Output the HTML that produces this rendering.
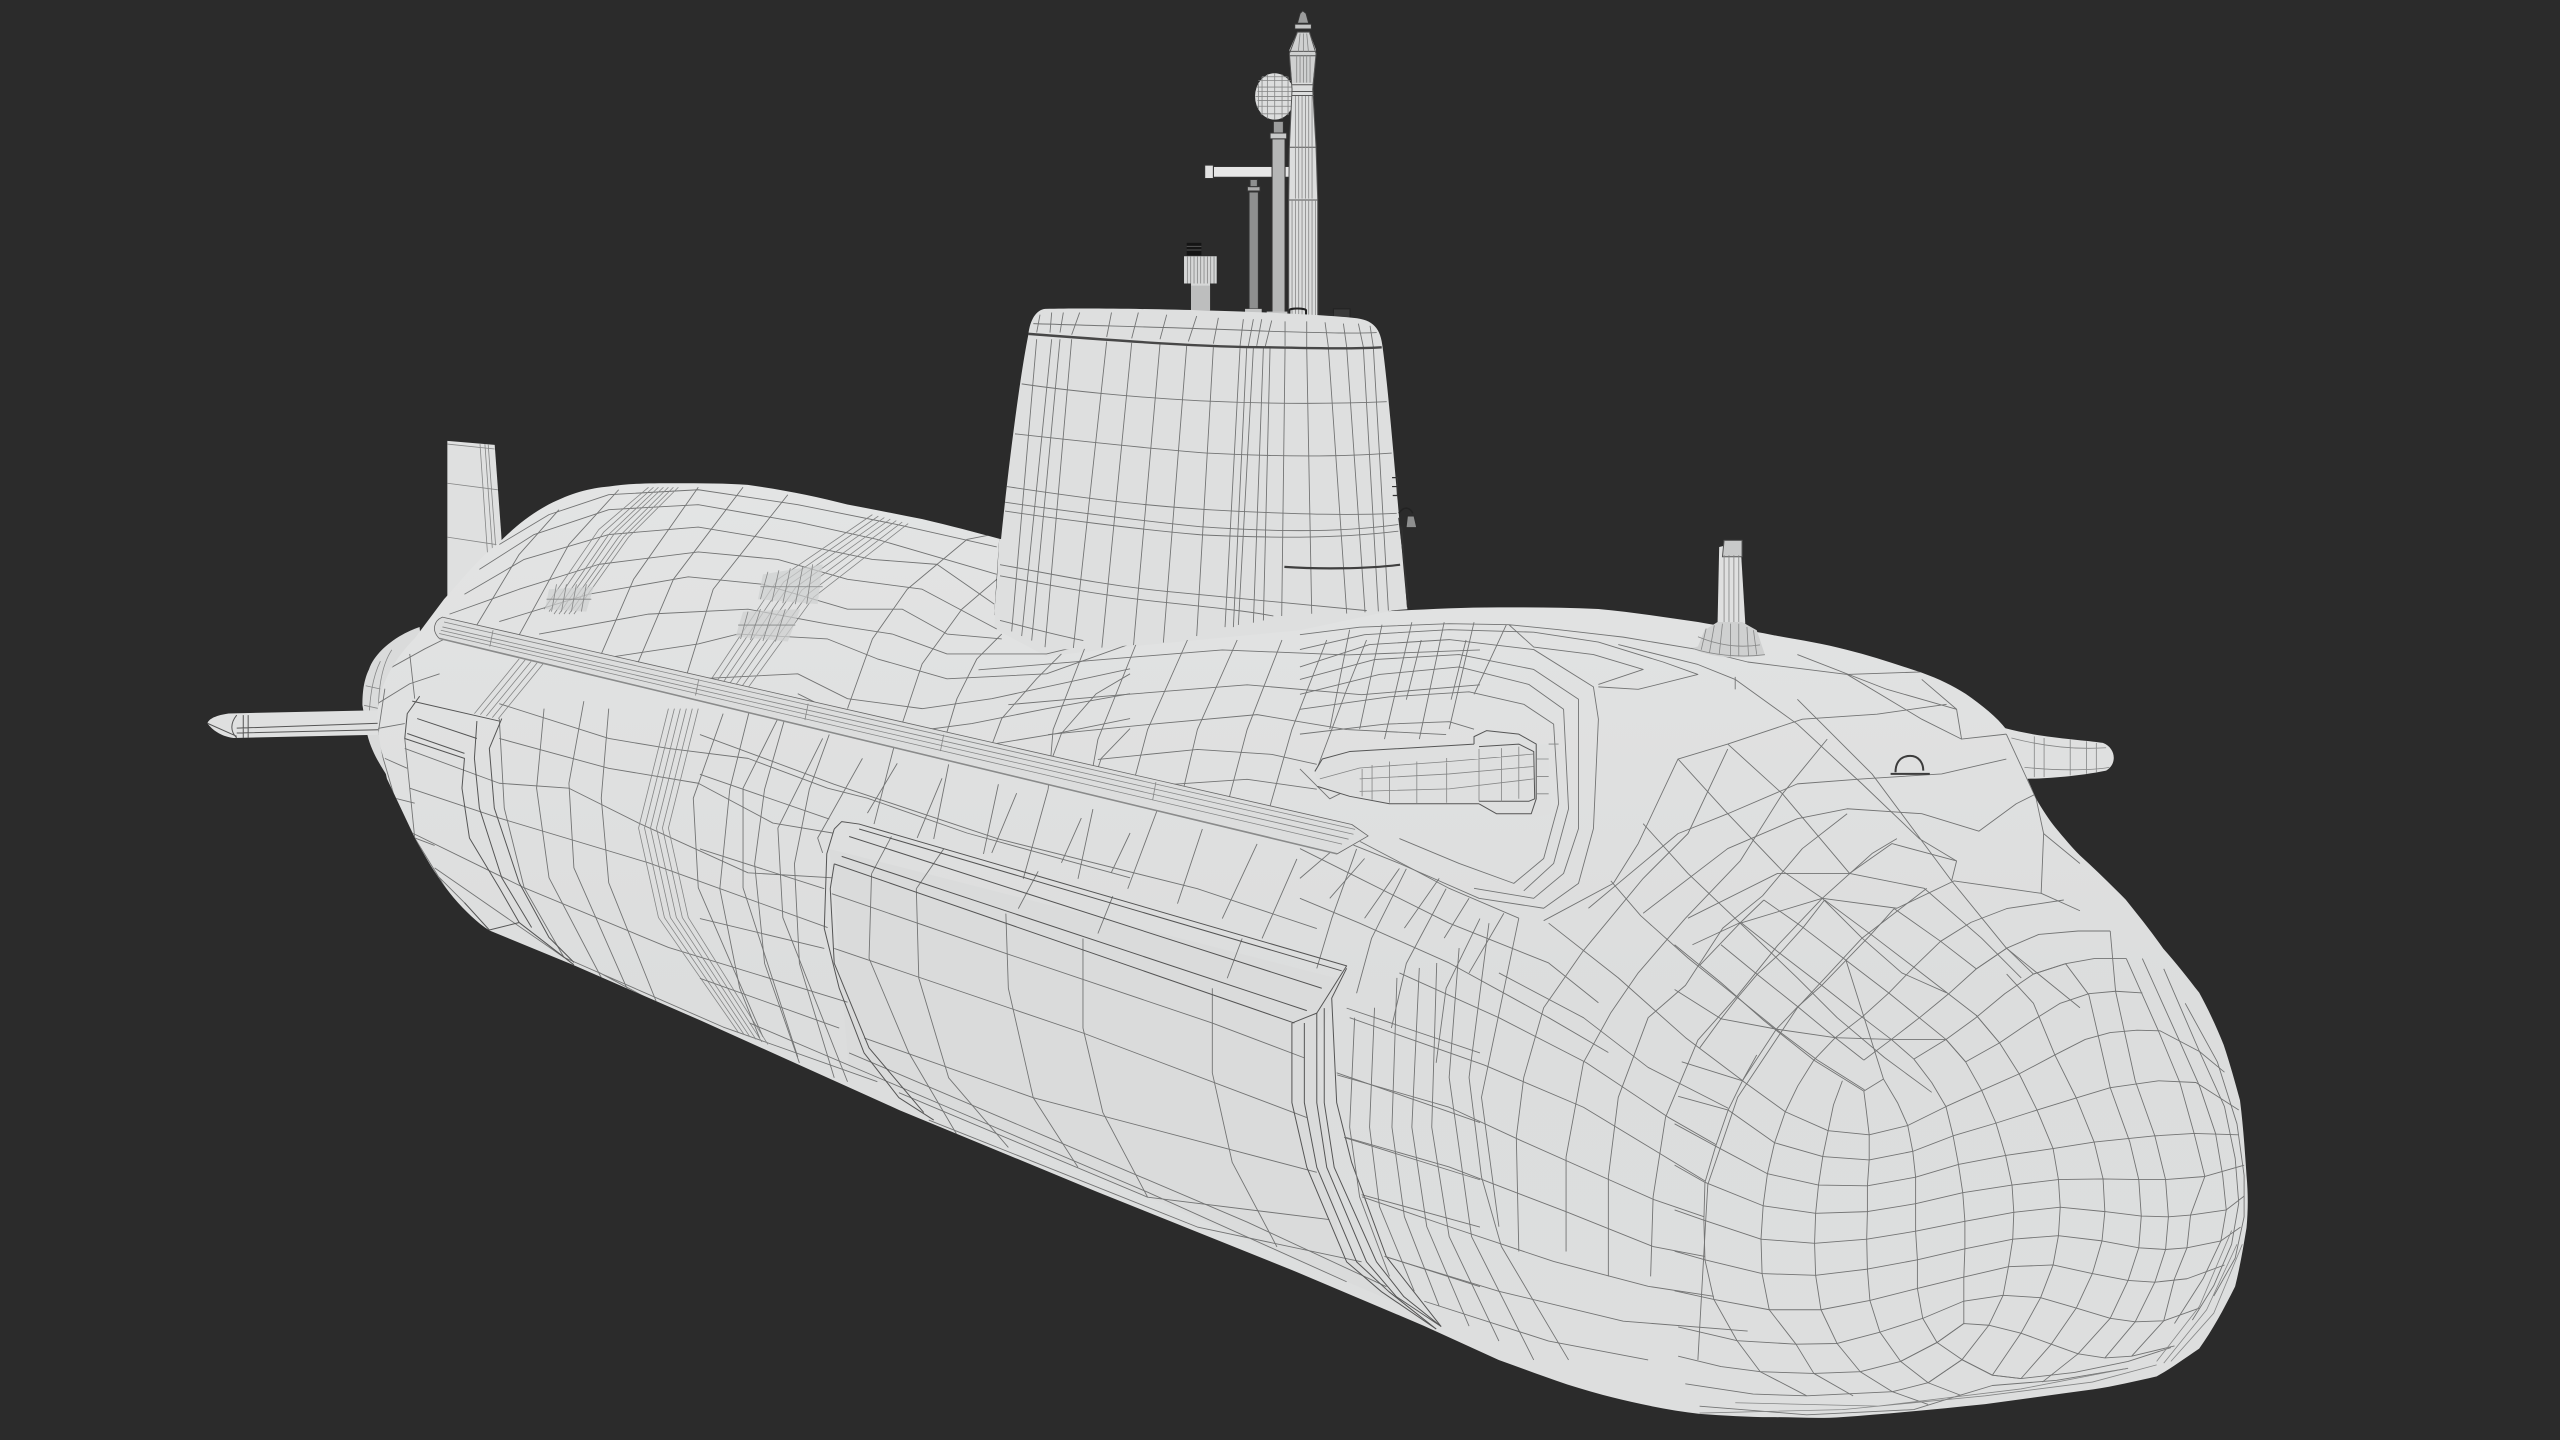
<!DOCTYPE html>
<html><head><meta charset="utf-8"><title>Submarine wireframe</title>
<style>
html,body{margin:0;padding:0;background:#2b2b2b;width:2560px;height:1440px;overflow:hidden}
svg{display:block}
path,polyline,line,rect,ellipse{vector-effect:non-scaling-stroke}
.m{fill:none;stroke:#737474;stroke-width:.9;stroke-linejoin:round}
.f{fill:none;stroke:#858686;stroke-width:.8;stroke-linejoin:round}
.d{fill:none;stroke:#555;stroke-width:1;stroke-linejoin:round}
</style></head><body>
<svg width="2560" height="1440" viewBox="0 0 1568 882" xmlns="http://www.w3.org/2000/svg">
<defs>
<linearGradient id="g" x1="0" y1="0" x2="0" y2="1"><stop offset="0" stop-color="#e3e4e4"/><stop offset=".55" stop-color="#dcdddd"/><stop offset="1" stop-color="#dddede"/></linearGradient>
<clipPath id="hc"><path id="hp" d="M231 440C231 425 238 407 254 391L272 367C283 355 293 342 306 332C316 322 325 315 336 309C350 302 361 299 373 298C385 296 400 296 412 296C430 296 445 296 458 297C480 300 500 304 519 309C535 312 550 315 565 318C582 322 597 326 612 330L609 376L613 384C622 391 630 395 641 397C650 398 660 398 671 397C680 395 686 393 692 391C726 384 761 379 796 380C816 377 836 375 857 374C877 373 897 372 918 372C938 372 958 372 979 373C1000 375 1020 378 1040 381C1056 384 1071 386 1086 389C1102 392 1116 394 1131 398C1147 402 1162 407 1177 412C1188 416 1196 420 1204 425C1214 432 1223 439 1229 447C1233 454 1235 461 1238 468C1241 475 1244 482 1247 489C1251 496 1255 502 1259 507C1264 513 1269 519 1274 524C1284 533 1293 542 1302 551C1310 561 1318 571 1325 581C1333 590 1340 599 1347 608C1353 619 1358 630 1362 640C1366 652 1369 663 1372 674C1374 690 1375 705 1376 720C1377 731 1377 741 1376 752C1374 764 1372 776 1369 788C1362 802 1355 815 1347 826C1338 832 1330 838 1321 843C1308 846 1295 849 1282 851C1260 854 1238 857 1216 860C1187 863 1157 866 1128 868C1114 869 1099 868 1085 868C1070 868 1056 867 1041 866C1015 863 985 856 960 848C945 843 932 838 918 833L872 812L794 779L672 730L551 680L429 625L351 591L300 570C292 565 285 558 278 550C268 538 261 526 254 513L237 477C234 464 232 452 231 440Z"/></clipPath>
<clipPath id="sc2"><path d="M85 700H1150L1222 1365L840 1385L700 1420L490 1440L286 1452L140 1452L5 1404L-17 1375L-40 1300Z"/></clipPath>
</defs>
<rect width="1568" height="882" fill="#2b2b2b"/>

<!-- rudder -->
<path d="M274 270L303 272.500L307 327L308 345L274 368Z" fill="#dfe0e0"/>
<g class="f"><path d="M274 272L303 275M274 296L305 300M274 329L307 334M294 272L299 345M297 272L302 342M299 272L304 340"/></g>
<!-- stern cone -->
<path d="M257 384C245 388 230 398 226 410C222 418 222 428 222 432L225 450C228 462 234 470 240 480L262 440Z" fill="#dadbdb"/>
<g class="f"><path d="M233 405C228 415 226 430 226 445M240 398C232 410 231 430 232 450M224 420L233 422M223 432L232 434"/></g>
<!-- stern plane -->
<path d="M232 435L140 437C133 438 128 440 127 443C130 447 135 451 143 452L232 450Z" fill="#dfe0e0"/>
<g class="d"><path d="M145 438C141 443 141 448 145 452M149 438L149 452M152 438L152 452M145 446L232 443M145 449L232 447M127 443L145 451"/></g>
<!-- bow plane -->
<path d="M1228 446C1250 452 1275 453 1288 455C1296 458 1297 468 1290 472C1270 476 1250 477 1240 477Z" fill="#dfe0e0"/>
<g class="f"><path d="M1232 452C1255 458 1275 459 1290 458M1240 470C1260 472 1280 472 1292 470M1246 451V476M1252 452V476M1268 453V475M1278 454L1278 474M1284 455L1284 473"/></g>
<!-- hull -->
<use href="#hp" fill="url(#g)"/>
<!-- fill behind sail base -->
<path d="M612 330L862 372L796 386L692 396L641 402L609 385Z" fill="#dedfdf"/>

<g clip-path="url(#hc)">
<!-- panel shade -->
<path d="M508 520L822 600L806 640L820 760L860 800L520 655Z" fill="#dadbdb"/>

<!-- Z3: stern / rear body -->
<g transform="translate(214.4,269.500) scale(.3047)">
<g class="m">
<path d="M300 210 400 150 520 110 700 100 900 130 1100 170 1300 215M260 260 370 190 520 140 700 130 900 165 1060 200 1300 270M230 310 350 240 520 190 700 175 880 205 1050 240 1180 250 1295 330M200 350 340 300 500 250 700 225 860 240 1000 280 1150 300 1300 380M300 365 480 310 680 275 830 290 1000 340 1110 340 1200 390 1310 400M380 390 600 350 800 340 960 370 1090 390 1200 430 1400 430 1568 390M500 440 700 410 780 390 960 400 1060 440 1200 480 1400 470 1568 410M700 480 900 470 1000 520 1150 540 1290 520 1568 460M900 510 1000 560 1100 590 1250 570 1400 540 1568 510M1100 600 1300 610 1420 590 1568 560"/>
<path d="M250 380 340 230 420 140M330 410 440 210 540 100M490 465 570 280 700 95M565 480 650 280 790 95M665 510 730 300 880 110M1000 540 1050 400 1120 300 1240 200 1290 190M1100 600 1150 450 1230 340 1300 280M1190 620 1220 520 1260 440 1310 390M1280 640 1310 560 1380 480 1430 430M1400 670 1430 590 1500 510 1568 470M1490 700 1510 640 1568 580"/>
<path d="M300 560 310 740 350 900 430 1040M390 540 375 700 400 880 510 1090M470 525 440 690 450 860 560 1110M520 540 505 720 520 890 620 1140M750 550 690 720 700 900 830 1200M860 560 790 700 790 900 900 1240M950 600 860 780 870 960 1000 1290M1030 640 940 800 950 830M1100 650 1040 750M1190 680 1140 800M1340 710 1290 830M1470 760 1430 850M1568 790 1530 870"/>
<path d="M110 620 300 690 440 700 580 770 800 870 970 880M120 700 300 760 600 850 960 980M125 790 350 900 640 1020 1000 1130M170 860 430 1040 750 1180 1060 1290M300 530 520 600 640 620 800 640 960 700 1040 720 1240 790 1568 880M300 600 520 660 700 690 850 770 970 790M500 1070 800 1230 1200 1430"/>
<path d="M60 470 150 420 190 400M55 530 120 490 180 470M55 580 110 570M120 430 130 520M70 640 115 660M90 720 130 730M130 800 170 815"/>
<path d="M110 600 130 800 210 930M70 500 55 600 90 720 160 860 230 930"/>
</g>
<g class="f">
<path d="M390 340 500 180 600 95M400 345 510 185 610 95M410 350 520 190 620 95M420 350 530 190 630 95M430 350 540 195 640 95M440 350 550 195 650 95M450 350 560 195 660 95"/>
<path d="M250 550 340 440M262 552 352 442M274 555 364 445M286 558 376 448M298 560 388 450"/>
<path d="M720 490 860 280 1050 150M732 493 872 285 1062 153M744 496 884 290 1074 156M756 500 896 296 1086 159M768 503 908 302 1098 162M780 506 920 310 1110 165M792 509 932 316 1122 168"/>
<path d="M640 540 580 780 620 960 780 1190M652 540 592 780 632 960 792 1195M664 540 604 780 644 960 804 1200M676 540 616 780 656 960 816 1205M688 540 628 780 668 960 828 1210M700 540 640 780 680 960 840 1215"/>
</g>
<!-- windows -->
<path d="M400 300L490 295L475 345L392 340ZM830 270L950 250L940 330L820 320ZM790 345L905 340L880 405L775 395Z" fill="#cfd0d0" opacity=".7"/>
<g class="f">
<path d="M415 290L405 345M435 290L425 345M455 290L445 345M475 290L465 345M395 320H485M840 265L825 320M862 262L848 325M885 258L870 328M910 255L895 330M930 250L918 330M825 295H950M800 345L785 400M825 340L805 402M850 340L830 404M875 340L855 405M780 372H895"/>
</g>
<!-- rear panel -->
<g class="d">
<path d="M140 515 115 550 110 600 230 640 225 700 240 800 300 900 340 970 450 1055"/>
<path d="M305 560 280 620 290 740 340 890 400 1000 450 1050"/>
<path d="M125 525 300 565M135 560 255 600M115 590 230 630"/>
<path d="M255 565 250 640 260 740 305 880 365 980"/>
<path d="M230 930 280 985 340 970"/>
</g>
</g>

<!-- Z2: mid body -->
<g transform="translate(428.700,392) scale(.3047)">
<g class="m">
<path d="M345 470 340 640 420 830 520 1000M435 500 440 680 500 880 620 1020M615 550 620 700 670 920 760 1060M770 600 770 780 810 950 900 1120M1030 700 1030 870 1070 1050 1160 1220"/>
<path d="M345 470 385 395M435 500 490 420M640 540 680 465M800 590 830 515M1060 680 1090 600"/>
<path d="M265 510 615 630 1030 770 1215 840M270 620 770 790 1220 960M330 800 670 920 1240 1070M400 910 900 1120 1265 1165M460 965 1000 1180 1330 1250"/>
<path d="M100 770 500 940 900 1110 1300 1290M300 830 700 1000 1100 1170 1380 1300"/>
<path d="M390 215 350 370M500 250 470 400M600 290 570 430M700 300 650 480M790 340 760 480M920 340 860 500M1010 380 960 530M1120 410 1050 560M1200 440 1130 600"/>
<path d="M170 160 130 300 110 450 130 650 200 850M100 140 60 300 40 500 80 700 120 800M260 190 220 300 190 450 200 650 270 880"/>
<path d="M0 190 270 290 600 400 1000 500 1240 580M0 270 260 360M0 420 250 500M0 560 250 620M0 680 280 780"/>
<path d="M1320 420 1270 560 1240 660M1420 460 1350 600 1320 710M1500 500 1420 650 1390 780M1568 560 1500 700 1480 850"/>
<path d="M1280 870 1568 970M1295 1000 1568 1085M1330 1115 1568 1180M1380 1240 1568 1300"/>
<path d="M1300 740 1568 830"/>
<!-- deck patch -->
<path d="M560 60 800 40 1050 20 1300 30 1568 20M620 130 850 110 1100 90 1330 110 1568 90M700 190 900 170 1120 150 1300 180 1500 190M800 240 1000 220 1150 230 1240 250M950 290 1100 280 1240 300"/>
<path d="M780 0 710 180 700 300M880 0 800 200 780 310M980 0 900 180 860 330M1080 0 1000 180 960 350M1170 0 1100 180 1050 370M1260 0 1190 180 1130 390M1340 0 1300 100 1240 260M1450 0 1420 120M1540 0 1510 120"/>
</g>
<g class="d">
<path d="M270 380 285 365 320 370 1300 655 1240 750 1190 770"/>
<path d="M320 380 1290 665M300 395 1250 700M285 435 1220 745M270 450 1195 770"/>
<path d="M270 380 255 430 250 580 280 700 330 830 400 920 470 965"/>
<path d="M270 450 262 500 270 650 340 820 450 950"/>
<path d="M1190 770 1190 930 1220 1060 1300 1250 1370 1310 1480 1385"/>
<path d="M1215 770 1215 930 1240 1060 1320 1250 1385 1310 1480 1385"/>
<path d="M1240 750 1240 930 1260 1060 1340 1250 1400 1320 1490 1380"/>
<path d="M1255 740 1255 930 1275 1060 1360 1250 1415 1320 1490 1380"/>
<path d="M1300 660 1270 720 1280 930 1310 1050 1380 1240 1490 1380"/>
</g>
</g>

<!-- Z1: forebody -->
<g transform="translate(796.200,355.200) scale(.3047)">
<g class="m">
<path d="M0 175 140 130 300 120 470 140 590 215 600 280 590 500 560 610 490 660 360 640 200 570 100 530"/>
<path d="M0 200 150 160 320 150 470 180 560 240 560 500 530 590 470 640 350 620"/>
<path d="M0 230 160 190 320 175 460 210 530 260 540 460 510 570 450 625"/>
<path d="M0 260 180 235 340 225 450 250 510 290 520 450 490 560 430 610 320 570 200 520"/>
<path d="M0 310 170 290 300 285 350 300M0 110 120 95 300 88 420 90 520 100 650 115 800 140 900 165 1100 190 1250 185M0 140 130 110 300 100 470 105 600 125 730 165 800 190 680 220 600 215M420 90 470 135 590 150 690 180 600 210"/>
<path d="M100 100 60 300M165 90 120 300M225 85 170 320M290 85 240 320M350 85 300 300M415 90 350 230M0 380 60 440 120 410"/>
<path d="M0 600 70 540M60 640 130 560M130 680 200 580M210 700 280 600M290 720 340 640M340 790 410 670"/>
<path d="M0 480 110 520 300 620 440 680M0 540 100 590 300 690 500 770 600 850M0 640 120 690 300 770 500 880 620 950"/>
<path d="M500 690 640 800 775 920 889 1006M400 790 570 880 700 980 861 1062M200 790 400 880 575 970 740 1080 836 1135M100 880 370 975 570 1060 735 1160 814 1208M75 995 300 1060 440 1125 620 1205 710 1245 812 1280M90 1120 300 1180 535 1270 710 1340 814 1360M125 1240 300 1300 510 1370 700 1420 832 1440M170 1360 400 1430 650 1490 900 1510M250 1450 500 1530 700 1568"/>
<path d="M800 1568 815 1300 820 1215 880 1040 1000 860 1130 720 1260 620M705 1400 710 1240 735 1080 800 925 880 835 960 735 1050 640 1150 550 1200 520M620 1400 620 1200 640 1040 700 880 775 815 850 700 930 635 1010 540 1100 470M535 1350 535 1160 570 970 625 870 680 790 775 680 885 565 970 430 1060 320M440 1350 435 1120 450 1000 490 860 570 745 690 600 780 510 860 340"/>
<path d="M110 880 100 1100 120 1240 180 1400M150 860 140 1100 160 1260 230 1430M195 800 185 1100 210 1280 280 1460M240 780 225 1100 255 1300 340 1500M275 770 265 1100 300 1320 400 1530M320 740 300 1000 345 1320 470 1568M380 690 340 1000 365 1200 405 1340 540 1568M440 680 365 1040 400 1300"/>
<path d="M625 605 685 675 780 760 880 840 960 905 1040 965 1135 1025M690 490 780 590 885 690 1000 800 1080 880 1175 960 1270 1030M760 360 860 470 970 585 1050 640 1130 720 1210 790 1300 830M860 330 970 430 1105 590 1255 620 1370 720 1450 800M1000 240 1150 390 1310 605 1420 740 1568 860M640 130 800 170 875 200 1000 290 1130 410 1245 520 1320 565M1250 200 1320 260 1330 320 1420 310"/>
<path d="M490 685 630 610 680 530 760 360 860 330 1010 280 1160 270 1300 250M580 660 760 510 860 470 1000 410 1130 400 1290 390 1420 360M690 670 860 540 1000 480 1100 460 1250 470 1365 505 1440 450 1480 430M780 680 960 590 1105 590 1190 530 1320 565 1310 605M885 690 1050 640 1200 660 1315 605 1490 630 1568 665M1495 510 1490 630M875 195 875 220"/>
<path d="M1100 190 1250 280 1330 320M1420 310 1480 440 1495 510 1568 570M1000 150 1180 220 1320 260"/>
</g>
<path d="M30 385 45 360 100 345 350 330 350 315 375 303 440 310 475 330 500 330 505 470 465 478 395 470 360 450 180 450 100 435 35 415Z" fill="#dedfdf"/>
<g class="d">
<path d="M30 385 45 360 100 345 350 330M35 415 100 435 180 450 360 450M350 330 350 315 375 303 440 310 475 330 475 440 465 470 395 470 360 450"/>
<path d="M360 335 440 330 470 345 472 440 460 445 360 445"/>
</g>
<g class="f">
<path d="M120 378 300 365 470 350M120 400 300 390 470 375M120 425 300 420 470 400M40 400 120 378M125 380V435M145 372V442M180 365V448M235 365V450M295 358V448M360 340V445M405 338V445M440 335V440M500 330 520 330M475 360H500M475 395H500M475 430H500"/>
</g>
</g>

<!-- nose grid -->
<g transform="translate(1041,551.250) scale(.2187,.2109)">
<g class="m">
<path d="M-50 470 120 525 240 615 360 670 475 682 583 655 690 600 790 553 895 505 995 450 1080 405 1150 385 1225 378 1290 380 1400 440 1470 500"/>
<path d="M-60 570 80 610 210 705 345 745 475 755 597 730 710 685 830 648 945 610 1055 575 1150 545 1285 525 1390 530 1510 610"/>
<path d="M-70 650 45 715 190 795 333 828 470 830 605 805 725 768 857 742 990 722 1105 703 1275 685 1385 678 1510 682"/>
<path d="M-70 770 15 820 178 888 325 910 470 905 605 882 737 850 875 828 1005 812 1130 810 1230 812 1305 812 1415 803 1525 770"/>
<path d="M-70 900 12 930 172 985 322 997 468 985 605 962 743 933 880 907 1010 892 1135 905 1237 918 1313 920 1375 915 1475 900 1525 860"/>
<path d="M-70 1020 15 1045 175 1085 325 1090 470 1072 610 1045 743 1013 877 985 1005 975 1127 990 1230 1010 1305 1015 1365 1010 1460 990 1515 950"/>
<path d="M-70 1135 40 1160 195 1190 340 1190 477 1163 610 1128 740 1095 865 1065 990 1060 1100 1085 1200 1105 1275 1110 1365 1100 1470 1060"/>
<path d="M-60 1240 105 1280 270 1290 385 1288 505 1255 625 1215 740 1165 850 1148 955 1155 1055 1185 1150 1215 1220 1225 1300 1222 1400 1185"/>
<path d="M-60 1325 60 1355 170 1370 320 1375 450 1370 563 1340 665 1285 740 1230 810 1235 900 1258 985 1290 1060 1318 1135 1330 1210 1325 1330 1295"/>
<path d="M-40 1405 150 1435 300 1440 540 1428 640 1402 735 1335 820 1380 900 1390 1050 1372 1200 1340 1320 1300"/>
<path d="M0 1470 300 1495 600 1480 730 1438 820 1410 1000 1395 1200 1360"/>
<path d="M460 555 467 612 475 682 475 755 470 830 470 905 468 985 470 1072 477 1163 505 1255 563 1340 640 1402 730 1438"/>
<path d="M400 525 375 595 360 670 345 745 333 828 325 910 322 997 325 1090 340 1190 385 1288 450 1370 540 1428 640 1465"/>
<path d="M320 465 275 540 240 615 210 705 190 795 178 888 172 985 175 1085 195 1190 270 1290 320 1375 430 1440"/>
<path d="M160 450 120 525 80 610 45 715 15 820 12 930 15 1045 40 1160 105 1280 170 1370 300 1440"/>
<path d="M460 555 515 520 555 590 583 655 597 730 605 805 605 882 605 962 610 1045 610 1128 625 1215 665 1285 735 1335 820 1380 900 1390"/>
<path d="M600 462 650 530 690 600 710 685 725 768 737 850 743 933 743 1013 740 1095 740 1165 740 1230 665 1285 563 1340"/>
<path d="M690 405 745 470 790 553 830 648 857 742 875 828 880 907 877 985 865 1065 850 1148 810 1235 735 1335 640 1402"/>
<path d="M775 335 840 415 895 505 945 610 990 722 1005 812 1010 892 1005 975 990 1060 955 1155 900 1258 820 1380"/>
<path d="M860 215 935 300 995 450 1055 575 1105 703 1130 810 1135 905 1127 990 1100 1085 1055 1185 985 1290 900 1390"/>
<path d="M1025 185 1090 275 1150 545 1205 703 1230 812 1237 918 1230 1010 1200 1105 1150 1215 1060 1318 960 1400"/>
<path d="M1150 90 1165 265 1220 525 1275 685 1305 812 1313 920 1305 1015 1275 1110 1220 1225 1135 1330"/>
<path d="M1195 170 1285 380 1345 530 1385 678 1415 803 1375 915 1365 1010 1330 1100 1300 1222 1210 1325"/>
<path d="M1240 170 1340 400 1400 540 1445 678 1465 800 1475 900 1460 990 1410 1100 1330 1230"/>
<path d="M1300 200 1400 440 1470 600 1500 750 1510 880 1490 1000 1440 1120 1380 1220M1360 300 1450 470 1505 650 1525 800 1525 920 1500 1040 1440 1150"/>
<path d="M460 555 320 465 180 350 60 240 -70 130M515 520 410 175 290 80 180 0M-70 260 60 345 215 375 380 400 537 405 600 462M-20 130 115 65 225 155 342 248 455 340 537 405 690 405M60 130 160 215 275 310 380 400 460 465M180 0 290 80 410 175 530 270 690 405 745 470M350 0 480 100 600 195 775 335 840 415M545 25 675 120 775 200 860 140 935 215 1025 185"/>
<path d="M0 190 115 65 180 0M0 430 60 345 105 285 162 215 225 155 290 80 350 0M120 525 215 375 275 310 342 248 410 175 480 100 545 25M320 465 380 400 455 340 530 270 600 195 675 120 760 65 860 25 1020 0M460 465 537 405 618 340 698 272 775 200 860 140 950 100 1060 90 1150 90M600 462 690 405 770 345 855 272 935 215 1025 185 1105 170 1195 170M745 470 840 415 925 355 1010 300 1090 272 1165 265 1240 270"/>
</g>
<g class="f"><path d="M1490 960 1400 1180 1280 1340M1505 1000 1420 1190 1300 1345M1520 1000 1440 1200 1320 1340M0 1490 400 1480 800 1440 1100 1400 1280 1350M100 1460 500 1470 900 1420 1200 1360"/></g>
</g>
</g>

<!-- spine bar -->
<path d="M271 378L828 505L838 512L832 516L819 523L269 391C264 386 266 380 271 378Z" fill="#dcdddd"/>
<g class="f">
<path d="M272 381L830 508M271 384L829 511M270 386L826 514M269 388L822 517"/>
<path d="M271 378L828 505L838 512L819 523L269 391C264 386 266 380 271 378Z" stroke="#666"/>
<path d="M269 391L819 523" stroke="#8a8b8b" stroke-width="1.6"/>
<path d="M302 386L300 396M428 416L426 426M495 431L493 441M578 450L576 460M708 479L706 490"/>
</g>
<!-- aft mast on hull -->
<path d="M1053 335L1066 332L1069 382L1052 382Z" fill="#dfe0e0"/>
<path d="M1056 331H1067V341H1055Z" fill="#c8c9c9" stroke="#555"/>
<g class="f"><path d="M1056 340V382M1059 340V382M1062 340V382M1065 340V382"/></g>
<path d="M1040 396L1044 386L1052 381H1067L1076 386L1081 401C1065 404 1048 403 1036 397Z" fill="#cfd0d0"/>
<g class="f"><path d="M1036 397C1048 401 1065 403 1081 401M1040 390C1052 395 1065 397 1078 395M1045 385L1042 398M1050 383L1047 400M1055 382L1053 401M1060 382V402M1065 382V402M1070 384L1071 402M1074 386L1076 401"/></g>
<!-- handle -->
<path d="M1161 473C1161 466 1165 463 1170 463C1175 463 1178 467 1178 472M1158 474H1182" fill="none" stroke="#3c3c3c" stroke-width="2"/>

<!-- sail & masts -->
<g transform="translate(612.500,0) scale(.2042,.2734)">
<path d="M552 574H650V635H630V695H573V635H552Z" fill="#d6d7d7"/>
<path d="M560 544H604V572H560Z" fill="#141414"/>
<path d="M560 552H604M560 560H604" stroke="#555" fill="none"/>
<path d="M573 640H630V695H573Z" fill="#bdbebe"/>
<g class="f"><path d="M562 574V635M572 574V635M582 574V635M592 574V635M602 574V635M612 574V635M622 574V635M632 574V635M642 574V635"/></g>
<rect x="747" y="430" width="28" height="262" fill="#8e8f8f" stroke="#333"/>
<rect x="742" y="418" width="38" height="10" fill="#aaa" stroke="#333"/>
<rect x="750" y="402" width="22" height="16" fill="#8e8f8f" stroke="#333"/>
<rect x="735" y="692" width="50" height="16" fill="#c4c5c5"/>
<path d="M640 373H868V397H640Z" fill="#e6e6e6" stroke="#333"/>
<path d="M614 370H640V400H614Z" fill="#e2e2e2" stroke="#333"/>
<rect x="816" y="310" width="39" height="390" fill="#b5b6b6" stroke="#333"/>
<rect x="810" y="298" width="50" height="13" fill="#c8c9c9" stroke="#333"/>
<rect x="820" y="272" width="30" height="26" fill="#9c9d9d" stroke="#333"/>
<rect x="800" y="698" width="62" height="14" fill="#c4c5c5"/>
<ellipse cx="824" cy="216" rx="59" ry="52" fill="#dcdddd"/>
<g class="f">
<path d="M766 216H882M770 195H878M775 180H872M770 238H878M782 255H866M786 172H862M802 166V266M824 164V268M846 166V266M786 172V258M864 172V258M775 185V245M772 205H878M772 225H878"/>
</g>
<path d="M866 708V448L868 330L876 180L868 120L892 72H928L948 120L938 186L948 330L953 448V708Z" fill="#dcdddd"/>
<path d="M868 112L892 72H928L948 112L938 186H876Z" fill="#cfd0d0"/>
<path d="M884 54H934V65H884Z" fill="#c4c5c5" stroke="#333"/>
<path d="M892 52L900 30L908 24L918 30L926 52Z" fill="#9b9c9c" stroke="#333"/>
<g class="d" stroke-width=".8">
<path d="M866 708V448L868 330L876 200L868 120L892 72H928L948 120L938 200L948 330L953 448V708"/>
<path d="M866 448H953M868 330H947M868 115H948M868 125H948M876 190H938M876 205H940M876 214H942"/>
</g>
<g class="f">
<path d="M876 448V708M886 448V708M896 448V708M906 448V708M916 448V708M926 448V708M936 448V708M946 448V708M886 215V445M896 215V445M906 215V445M916 215V445M926 215V445M936 215V445M890 125V185M900 125V185M910 125V185M920 125V185M930 125V185M900 75L895 115M910 75V115M920 75L925 115"/>
</g>
<path d="M868 712V695C868 690 915 690 918 695V712" fill="none" stroke="#222" stroke-width="2"/>
<path d="M1000 692H1050V714H1000Z" fill="#3a3a3a" stroke="#222"/>
<path d="M960 702H1000V714H960Z" fill="#2e2e2e"/>
<!-- sail -->
<path d="M85 750C90 715 110 694 135 692C400 688 900 700 1060 712C1120 716 1142 735 1148 780C1170 900 1200 1200 1222 1365L840 1385L700 1420L490 1440L286 1452L140 1452L5 1404L-17 1375C0 1200 50 880 85 750Z" fill="#dedfdf"/>
<g clip-path="url(#sc2)">
<g class="m">
<path d="M110 760L35 1415M155 760L65 1425M180 760L95 1435M215 760L135 1450M320 765L220 1452M395 768L305 1455M480 770L400 1450M560 775L490 1440M640 778L590 1425M720 780L675 1405M740 780L700 1405M760 780L715 1400M790 780L760 1395M810 780L790 1390M855 780L845 1380M920 780L935 1375M985 780L1040 1375M1040 780L1095 1372M1090 780L1135 1370M1120 780L1165 1368"/>
<path d="M65 860C200 875 400 890 600 898C800 905 1000 905 1160 900"/>
<path d="M45 972C200 985 450 1005 620 1015C800 1022 1000 1025 1175 1015"/>
<path d="M20 1090C200 1110 420 1135 700 1145C900 1152 1050 1155 1190 1150"/>
<path d="M15 1125C150 1140 400 1165 600 1180C800 1190 1000 1195 1195 1175"/>
<path d="M15 1145C150 1160 400 1185 600 1198C800 1205 1000 1208 1195 1190"/>
<path d="M0 1265C150 1285 300 1310 500 1325C700 1340 900 1355 1100 1368"/>
<path d="M0 1290C150 1310 300 1335 500 1350C650 1362 750 1370 820 1380"/>
<path d="M0 1390C80 1405 180 1425 250 1435"/>
<path d="M100 725C300 730 600 735 800 742C950 745 1050 748 1130 745"/>
<path d="M120 705L110 745M155 700L150 745M190 700L180 745M240 698L215 750M335 698L320 755M415 700L395 758M500 705L480 760M590 708L565 765M655 712L640 770M730 715L720 775M760 715L745 775M785 715L770 775M815 718L795 778M855 720L855 775M920 720L920 778M975 722L985 778M1030 725L1040 778M1075 725L1090 778M1110 730L1120 778"/>
</g>
<path d="M85 748C300 760 600 778 800 778C950 780 1050 782 1145 778" fill="none" stroke="#474747" stroke-width="2.4"/>
<path d="M853 1270C950 1275 1100 1275 1200 1265" fill="none" stroke="#3f3f3f" stroke-width="2.2"/>
</g>
<path d="M1196 1150C1215 1130 1232 1140 1238 1150" fill="none" stroke="#222" stroke-width="1.500"/>
<path d="M1222 1156H1242L1250 1182H1218Z" fill="#8e8f8f" stroke="#2a2a2a"/>
<path d="M1196 1160L1228 1360M1205 1180L1222 1360" fill="none" stroke="#333" stroke-width="1"/>
<path d="M1176 1070H1192V1110H1178M1176 1090H1192" fill="none" stroke="#333" stroke-width="1.200"/>
</g>
</svg>
</body></html>
